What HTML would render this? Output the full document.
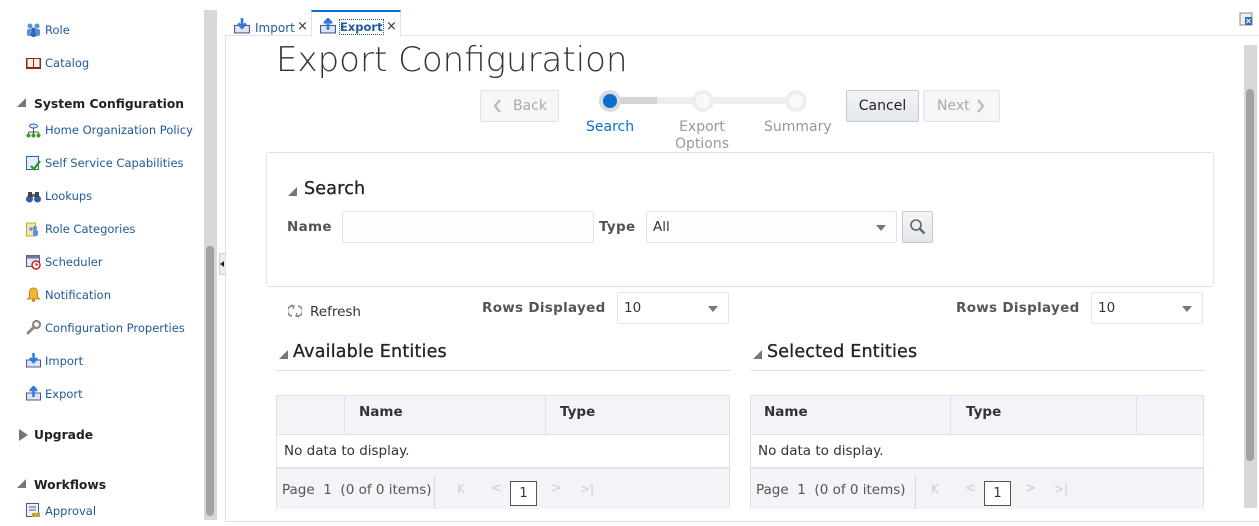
<!DOCTYPE html>
<html><head><meta charset="utf-8"><style>
*{box-sizing:border-box;margin:0;padding:0}
body{width:1259px;height:526px;overflow:hidden;background:#fff;font-family:"DejaVu Sans","Liberation Sans",sans-serif;position:relative;color:#333}
.a{position:absolute;white-space:nowrap}
.lk{font-size:11.5px;color:#1f5a98;line-height:14px}
.ic{position:absolute;width:15px;height:15px;left:26px}
.hd{font-size:12.3px;font-weight:bold;color:#222;line-height:16px}
.tri{position:absolute;width:0;height:0;border-left:9px solid transparent;border-bottom:9px solid #777}
.trr{position:absolute;width:0;height:0;border-top:6px solid transparent;border-bottom:6px solid transparent;border-left:9px solid #777}
.box{position:absolute;border:1px solid #dfe4ea;background:#fcfdfe;border-radius:2px}
.lbl{font-size:13.5px;font-weight:bold;color:#555;letter-spacing:0.3px}
.sel .dd{position:absolute;right:10px;top:13px;border-left:5px solid transparent;border-right:5px solid transparent;border-top:6px solid #777}
.tbl{position:absolute;border:1px solid #dde3ea;background:#fff}
.th{position:absolute;top:0;height:39px;background:#f2f4f7;border-bottom:1px solid #dde3ea}
.ft{position:absolute;left:0;right:0;top:71px;height:42px;background:#f2f4f7;border-top:2px solid #dde3ea}
.tt{font-size:13.5px;font-weight:bold;color:#333}
.h2{font-size:17.5px;color:#222;letter-spacing:0.2px;-webkit-text-stroke:0.3px #222}
</style></head><body>

<!-- sidebar -->
<svg class="ic" style="top:22px" viewBox="0 0 15 15"><circle cx="4" cy="4" r="2.5" fill="#5b8fd6"/><circle cx="11" cy="4" r="2.5" fill="#5b8fd6"/><circle cx="7.5" cy="8" r="2.5" fill="#2f66b8"/><rect x="1" y="7" width="5" height="7" rx="2" fill="#5b8fd6"/><rect x="9" y="7" width="5" height="7" rx="2" fill="#5b8fd6"/><rect x="5" y="10" width="5" height="5" rx="2" fill="#2f66b8"/></svg>
<div class="a lk" style="left:45px;top:23px">Role</div>
<svg class="ic" style="top:56px" viewBox="0 0 15 15"><rect x="0" y="2" width="15" height="11" fill="#9b2222"/><rect x="1.5" y="3" width="5.5" height="8" fill="#f4f0e6"/><rect x="8" y="3" width="5.5" height="8" fill="#f4f0e6"/></svg>
<div class="a lk" style="left:45px;top:56px">Catalog</div>
<div class="tri" style="left:17px;top:98px"></div>
<div class="a hd" style="left:34px;top:96px">System Configuration</div>
<svg class="ic" style="top:123px" viewBox="0 0 15 15"><ellipse cx="7.5" cy="3" rx="4" ry="2" fill="#dfe9f7" stroke="#2f66b8"/><path d="M7.5 5v4M2.5 9h10M2.5 9v2M7.5 9v2M12.5 9v2" stroke="#555"/><circle cx="2.5" cy="12.5" r="2" fill="#3a9a2a"/><circle cx="7.5" cy="12.5" r="2" fill="#3a9a2a"/><circle cx="12.5" cy="12.5" r="2" fill="#3a9a2a"/></svg>
<div class="a lk" style="left:45px;top:123px">Home Organization Policy</div>
<svg class="ic" style="top:156px" viewBox="0 0 15 15"><rect x="0.5" y="0.5" width="12" height="13" fill="#e6eefa" stroke="#2f66b8"/><path d="M5 10l3 3 6-8" stroke="#2c9a1c" stroke-width="2.2" fill="none"/></svg>
<div class="a lk" style="left:45px;top:156px">Self Service Capabilities</div>
<svg class="ic" style="top:189px" viewBox="0 0 15 15"><circle cx="3.5" cy="10" r="3.5" fill="#2f5f9f"/><circle cx="11.5" cy="10" r="3.5" fill="#2f5f9f"/><rect x="2" y="3" width="4" height="5" fill="#444"/><rect x="9" y="3" width="4" height="5" fill="#444"/><rect x="6" y="5" width="3" height="3" fill="#666"/></svg>
<div class="a lk" style="left:45px;top:189px">Lookups</div>
<svg class="ic" style="top:222px" viewBox="0 0 15 15"><rect x="0.5" y="1" width="9" height="13" fill="#f6e7a8" stroke="#c9a63a"/><circle cx="9" cy="6" r="2" fill="#5b8fd6"/><rect x="7" y="8" width="5" height="6" rx="2" fill="#5b8fd6"/><circle cx="5" cy="7" r="1.8" fill="#5b8fd6"/></svg>
<div class="a lk" style="left:45px;top:222px">Role Categories</div>
<svg class="ic" style="top:255px" viewBox="0 0 15 15"><rect x="0.5" y="0.5" width="13" height="11" fill="#e8ebf3" stroke="#4a5a8a"/><rect x="0.5" y="0.5" width="13" height="3" fill="#6a7aa8"/><circle cx="10" cy="10" r="4" fill="#fff" stroke="#c22" stroke-width="1.5"/><path d="M10 8v2h2" stroke="#c22"/></svg>
<div class="a lk" style="left:45px;top:255px">Scheduler</div>
<svg class="ic" style="top:287px" viewBox="0 0 15 15"><path d="M7.5 1c-3 0-4 2.5-4 5v4l-2 2h12l-2-2V6c0-2.5-1-5-4-5z" fill="#f0b63a" stroke="#c88a12"/><circle cx="7.5" cy="13.5" r="1.5" fill="#c88a12"/></svg>
<div class="a lk" style="left:45px;top:288px">Notification</div>
<svg class="ic" style="top:320px" viewBox="0 0 15 15"><path d="M2 13l6-6" stroke="#888" stroke-width="3" stroke-linecap="round"/><circle cx="10.5" cy="4.5" r="3.5" fill="none" stroke="#888" stroke-width="2.2"/></svg>
<div class="a lk" style="left:45px;top:321px">Configuration Properties</div>
<svg class="ic" style="top:353px" viewBox="0 0 15 15"><rect x="0.5" y="7" width="14" height="7" fill="#dfe4f2" stroke="#4a5a8a"/><path d="M7.5 0v8M4 5l3.5 4 3.5-4" stroke="#2f7ad8" stroke-width="2.5" fill="none"/></svg>
<div class="a lk" style="left:45px;top:354px">Import</div>
<svg class="ic" style="top:386px" viewBox="0 0 15 15"><rect x="0.5" y="7" width="14" height="7" fill="#dfe4f2" stroke="#4a5a8a"/><path d="M7.5 11V2M4 5l3.5-4 3.5 4" stroke="#2f7ad8" stroke-width="2.5" fill="none"/></svg>
<div class="a lk" style="left:45px;top:387px">Export</div>
<div class="trr" style="left:19px;top:429px"></div>
<div class="a hd" style="left:34px;top:427px">Upgrade</div>
<div class="tri" style="left:17px;top:479px"></div>
<div class="a hd" style="left:34px;top:477px">Workflows</div>
<svg class="ic" style="top:503px" viewBox="0 0 15 15"><rect x="0.5" y="0.5" width="12" height="13" fill="#eef" stroke="#4a5a8a"/><path d="M3 4h7M3 7h7" stroke="#4a5a8a"/><rect x="6" y="10" width="8" height="4" fill="#c9a03a"/></svg>
<div class="a lk" style="left:45px;top:504px">Approval</div>

<!-- sidebar scrollbar -->
<div class="a" style="left:204px;top:10px;width:13px;height:510px;background:#d8d8d8"></div>
<div class="a" style="left:206px;top:246px;width:8px;height:270px;background:#a2a2a2;border-radius:4px"></div>
<div class="a" style="left:219px;top:253px;width:7px;height:22px;background:#eceef1;border:1px solid #ccd"></div>
<div class="a" style="left:220px;top:261px;border-top:3px solid transparent;border-bottom:3px solid transparent;border-right:4px solid #222"></div>

<!-- main panel -->
<div class="a" style="left:225px;top:35px;width:1034px;height:487px;border-left:1px solid #dde3ea;border-top:1px solid #dde3ea;border-bottom:1px solid #dde3ea"></div>
<!-- tabs -->
<svg class="a" style="left:234px;top:18px" width="16" height="16" viewBox="0 0 15 15"><rect x="0.5" y="7" width="14" height="7" fill="#dfe4f2" stroke="#4a5a8a"/><path d="M7.5 0v8M4 5l3.5 4 3.5-4" stroke="#2f7ad8" stroke-width="2.5" fill="none"/></svg>
<div class="a" style="left:255px;top:21px;font-size:12px;color:#1f5a98">Import</div>
<div class="a" style="left:297px;top:19px;font-size:13px;color:#333">×</div>
<div class="a" style="left:311px;top:10px;width:90px;height:27px;border:1px solid #dde3ea;border-top:2px solid #0a6ed1;border-bottom:none;background:#fff"></div>
<svg class="a" style="left:320px;top:18px" width="16" height="16" viewBox="0 0 15 15"><rect x="0.5" y="7" width="14" height="7" fill="#dfe4f2" stroke="#4a5a8a"/><path d="M7.5 11V2M4 5l3.5-4 3.5 4" stroke="#2f7ad8" stroke-width="2.5" fill="none"/></svg>
<div class="a" style="left:340px;top:20px;font-size:11.5px;font-weight:bold;color:#1f5a98;outline:1px dotted #1f5a98;line-height:14px">Export</div>
<div class="a" style="left:386px;top:19px;font-size:13px;color:#333">×</div>
<svg class="a" style="left:1239px;top:11px" width="15" height="15" viewBox="0 0 15 15"><rect x="1" y="2" width="12" height="12" fill="#eee" stroke="#888"/><rect x="6" y="6" width="7" height="8" fill="#3a6ab8"/><path d="M7.5 8l4 4M11.5 8l-4 4" stroke="#fff"/></svg>

<div class="a" style="left:276px;top:40px;font-size:34px;font-weight:200;color:#333;font-family:'DejaVu Sans ExtraLight','DejaVu Sans',sans-serif">Export Configuration</div>

<!-- train -->
<div class="a" style="left:480px;top:90px;width:79px;height:32px;border:1px solid #dfe3e8;background:#f4f6f8;border-radius:2px;font-size:14px;color:#aaa;padding:7px 0 0 32px">Back</div>
<svg class="a" style="left:492px;top:98px" width="10" height="16" viewBox="0 0 10 16"><path d="M8 2L3 8l5 6" stroke="#bbb" stroke-width="2.2" fill="none"/></svg>
<div class="a" style="left:610px;top:97px;width:93px;height:7px;background:#eceef0"></div>
<div class="a" style="left:610px;top:97px;width:47px;height:7px;background:#d3d5d8"></div>
<div class="a" style="left:703px;top:97px;width:93px;height:7px;background:#eceef0"></div>
<div class="a" style="left:599px;top:90px;width:22px;height:22px;border-radius:50%;background:#d9dbde"></div>
<div class="a" style="left:603px;top:94px;width:14px;height:14px;border-radius:50%;background:#0a6ed1"></div>
<div class="a" style="left:692px;top:90px;width:22px;height:22px;border-radius:50%;background:#eceef0"></div>
<div class="a" style="left:696px;top:94px;width:14px;height:14px;border-radius:50%;background:#f8f9fa"></div>
<div class="a" style="left:785px;top:90px;width:22px;height:22px;border-radius:50%;background:#eceef0"></div>
<div class="a" style="left:789px;top:94px;width:14px;height:14px;border-radius:50%;background:#f8f9fa"></div>
<div class="a" style="left:586px;top:119px;font-size:14px;color:#0a6ed1">Search</div>
<div class="a" style="left:670px;top:119px;font-size:14px;color:#999;text-align:center;line-height:17px;width:64px">Export<br>Options</div>
<div class="a" style="left:764px;top:119px;font-size:14px;color:#999">Summary</div>
<div class="a" style="left:846px;top:90px;width:73px;height:32px;border:1px solid #c4cad2;background:linear-gradient(#f3f5f7,#e3e7eb);border-radius:2px;font-size:14px;color:#222;text-align:center;padding-top:7px">Cancel</div>
<div class="a" style="left:923px;top:90px;width:77px;height:32px;border:1px solid #dfe3e8;background:#f4f6f8;border-radius:2px;font-size:14px;color:#aaa;padding:7px 0 0 13px">Next</div>
<svg class="a" style="left:976px;top:98px" width="10" height="16" viewBox="0 0 10 16"><path d="M2 2l5 6-5 6" stroke="#bbb" stroke-width="2.2" fill="none"/></svg>

<!-- search panel -->
<div class="a" style="left:266px;top:152px;width:948px;height:135px;border:1px solid #dde3ea;border-radius:3px"></div>
<div class="tri" style="left:288px;top:187px"></div>
<div class="a h2" style="left:304px;top:179px">Search</div>
<div class="a lbl" style="left:287px;top:219px">Name</div>
<div class="box" style="left:342px;top:211px;width:252px;height:32px"></div>
<div class="a lbl" style="left:599px;top:219px">Type</div>
<div class="box sel" style="left:646px;top:211px;width:251px;height:32px"><span class="a" style="left:6px;top:7px;font-size:13.5px;color:#333">All</span><span class="dd"></span></div>
<div class="a" style="left:902px;top:211px;width:31px;height:32px;border:1px solid #c4cad2;background:linear-gradient(#f3f5f7,#e3e7eb);border-radius:2px"></div>
<svg class="a" style="left:909px;top:218px" width="18" height="18" viewBox="0 0 18 18"><circle cx="7" cy="7" r="5" fill="none" stroke="#666" stroke-width="1.6"/><path d="M10.5 10.5l5 5" stroke="#666" stroke-width="2.4"/></svg>

<!-- toolbar -->
<svg class="a" style="left:288px;top:304px" width="14" height="14" viewBox="0 0 14 14"><path d="M5 2A5 5 0 0 0 4 12M9 12A5 5 0 0 0 10 2" fill="none" stroke="#888" stroke-width="1.6"/><path d="M3 1l3 1-1 3M11 13l-3-1 1-3" fill="none" stroke="#888" stroke-width="1.4"/></svg>
<div class="a" style="left:310px;top:304px;font-size:13.5px;color:#333">Refresh</div>
<div class="a lbl" style="left:482px;top:300px">Rows Displayed</div>
<div class="box sel" style="left:617px;top:292px;width:112px;height:32px;background:#fff"><span class="a" style="left:6px;top:7px;font-size:13.5px;color:#333">10</span><span class="dd"></span></div>
<div class="a lbl" style="left:956px;top:300px">Rows Displayed</div>
<div class="box sel" style="left:1091px;top:292px;width:112px;height:32px;background:#fff"><span class="a" style="left:6px;top:7px;font-size:13.5px;color:#333">10</span><span class="dd"></span></div>

<!-- entity headers -->
<div class="tri" style="left:279px;top:350px"></div>
<div class="a h2" style="left:293px;top:342px">Available Entities</div>
<div class="a" style="left:276px;top:370px;width:455px;height:1px;background:#dde3ea"></div>
<div class="tri" style="left:753px;top:350px"></div>
<div class="a h2" style="left:767px;top:342px">Selected Entities</div>
<div class="a" style="left:750px;top:370px;width:455px;height:1px;background:#dde3ea"></div>

<!-- left table -->
<div class="tbl" style="left:276px;top:395px;width:454px;height:114px;border-bottom:none">
 <div class="th" style="left:0;width:68px;border-right:1px solid #dde3ea"></div>
 <div class="th" style="left:68px;width:201px;border-right:1px solid #dde3ea"><span class="a tt" style="left:14px;top:8px">Name</span></div>
 <div class="th" style="left:269px;width:183px"><span class="a tt" style="left:14px;top:8px">Type</span></div>
 <div class="a" style="left:7px;top:47px;font-size:13.5px;color:#333">No data to display.</div>
 <div class="ft"><span class="a" style="left:5px;top:13px;font-size:13.5px;color:#555">Page&nbsp;&nbsp;1&nbsp;&nbsp;(0 of 0 items)</span><span class="a" style="left:157px;top:6px;width:1px;height:34px;background:#d4d9e0"></span><span class="a" style="left:180px;top:13px;font-size:12px;color:#ccc">K</span><span class="a" style="left:214px;top:12px;font-size:13px;color:#ccc">&lt;</span><span class="a" style="left:233px;top:12px;width:27px;height:25px;border:1px solid #555;background:#fff;font-size:13px;text-align:center;padding-top:4px;color:#333">1</span><span class="a" style="left:274px;top:12px;font-size:13px;color:#ccc">&gt;</span><span class="a" style="left:303px;top:13px;font-size:12px;color:#ccc">&gt;|</span></div>
</div>

<!-- right table -->
<div class="tbl" style="left:750px;top:395px;width:454px;height:114px;border-bottom:none">
 <div class="th" style="left:0;width:200px;border-right:1px solid #dde3ea"><span class="a tt" style="left:13px;top:8px">Name</span></div>
 <div class="th" style="left:200px;width:186px;border-right:1px solid #dde3ea"><span class="a tt" style="left:15px;top:8px">Type</span></div>
 <div class="th" style="left:386px;width:66px"></div>
 <div class="a" style="left:7px;top:47px;font-size:13.5px;color:#333">No data to display.</div>
 <div class="ft"><span class="a" style="left:5px;top:13px;font-size:13.5px;color:#555">Page&nbsp;&nbsp;1&nbsp;&nbsp;(0 of 0 items)</span><span class="a" style="left:164px;top:6px;width:1px;height:34px;background:#d4d9e0"></span><span class="a" style="left:180px;top:13px;font-size:12px;color:#ccc">K</span><span class="a" style="left:214px;top:12px;font-size:13px;color:#ccc">&lt;</span><span class="a" style="left:233px;top:12px;width:27px;height:25px;border:1px solid #555;background:#fff;font-size:13px;text-align:center;padding-top:4px;color:#333">1</span><span class="a" style="left:274px;top:12px;font-size:13px;color:#ccc">&gt;</span><span class="a" style="left:303px;top:13px;font-size:12px;color:#ccc">&gt;|</span></div>
</div>

<!-- right scrollbar -->
<div class="a" style="left:1244px;top:45px;width:13px;height:463px;background:#d8d8d8"></div>
<div class="a" style="left:1246px;top:89px;width:8px;height:372px;background:#a2a2a2;border-radius:4px"></div>
</body></html>
